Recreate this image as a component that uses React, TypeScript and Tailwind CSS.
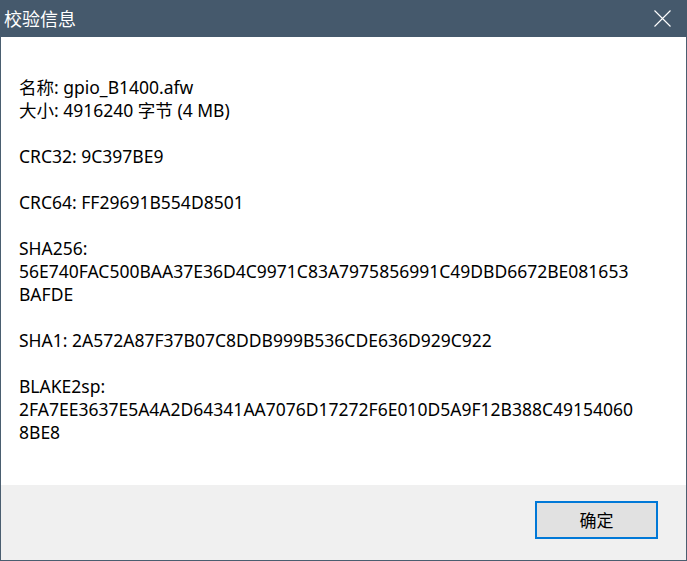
import React from 'react';

const lines = [
  '名称: gpio_B1400.afw',
  '大小: 4916240 字节 (4 MB)',
  '',
  'CRC32: 9C397BE9',
  '',
  'CRC64: FF29691B554D8501',
  '',
  'SHA256:',
  '56E740FAC500BAA37E36D4C9971C83A7975856991C49DBD6672BE081653',
  'BAFDE',
  '',
  'SHA1: 2A572A87F37B07C8DDB999B536CDE636D929C922',
  '',
  'BLAKE2sp:',
  '2FA7EE3637E5A4A2D64341AA7076D17272F6E010D5A9F12B388C49154060',
  '8BE8',
];

const App = () => {
  return (
    <div className="w-[687px] h-[561px] flex flex-col bg-white font-['Noto_Sans','Noto_Sans_CJK_SC',sans-serif] overflow-hidden">
      {/* Title bar */}
      <div className="h-[37px] bg-[#45596c] flex items-center justify-between shrink-0">
        <span className="pl-[4px] text-white text-[18px] leading-none">校验信息</span>
        <button className="w-[46px] h-[37px] flex items-center justify-center mr-[2px]" aria-label="Close">
          <svg width="17" height="17" viewBox="0 0 17 17" fill="none">
            <path d="M0.5 0.5 L16.5 16.5 M16.5 0.5 L0.5 16.5" stroke="white" strokeWidth="1.1" />
          </svg>
        </button>
      </div>

      {/* Body */}
      <div className="flex-1 flex flex-col border-x border-b border-[#4a5e70]">
        <div className="flex-1 pt-[39px] pl-[18px] text-black text-[17.5px]">
          {lines.map((line, i) => (
            <div key={i} className="h-[23px] leading-[23px] whitespace-pre">
              {line}
            </div>
          ))}
        </div>

        {/* Footer */}
        <div className="h-[75px] bg-[#f0f0f0] flex justify-end items-start pt-[16px] pr-[28px] shrink-0">
          <button className="w-[123px] h-[38px] bg-[#e1e1e1] border-2 border-[#0078d7] text-black text-[17px] leading-none">
            确定
          </button>
        </div>
      </div>
    </div>
  );
};

export default App;
